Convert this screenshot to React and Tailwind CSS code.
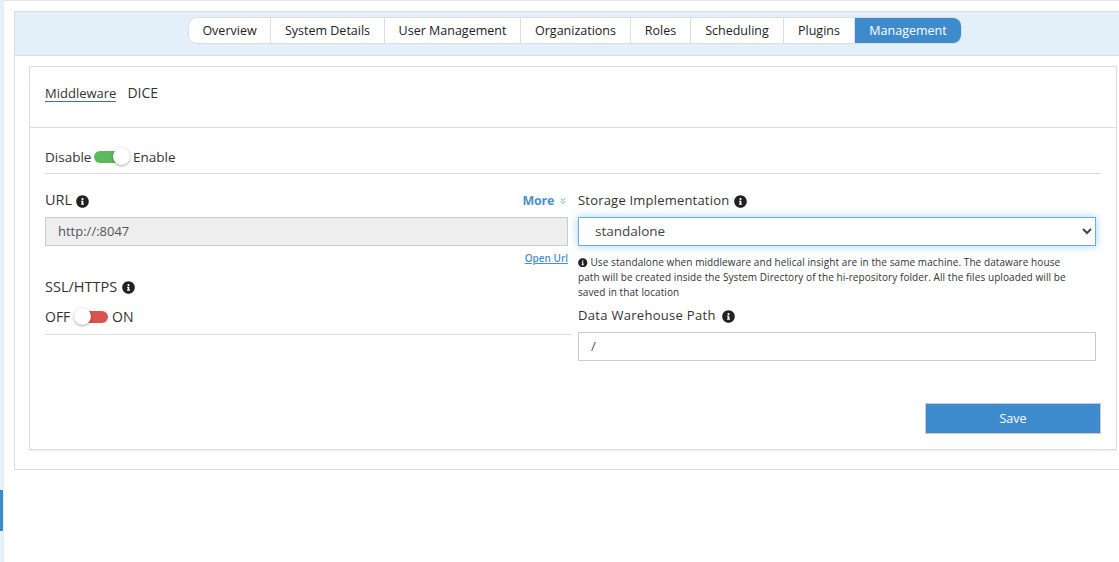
import { FaInfoCircle } from 'react-icons/fa';
import { ChevronsDown } from 'lucide-react';

const tabs = [
  { name: 'Overview', w: 'w-[82px]' },
  { name: 'System Details', w: 'w-[114px]' },
  { name: 'User Management', w: 'w-[136px]' },
  { name: 'Organizations', w: 'w-[110px]' },
  { name: 'Roles', w: 'w-[60px]' },
  { name: 'Scheduling', w: 'w-[93px]' },
  { name: 'Plugins', w: 'w-[71px]' },
];

function Info({ className = '' }) {
  return <FaInfoCircle className={`inline-block text-[#222] ${className}`} />;
}

function Toggle({ on }) {
  return (
    <span className={`relative inline-block h-[12px] w-[32px] rounded-full ${on ? 'bg-[#5cb85c]' : 'bg-[#d9534f]'}`}>
      <span
        className={`absolute top-[-3px] h-[17px] w-[17px] rounded-full bg-white shadow-[0_1px_3px_rgba(0,0,0,0.35)] ${on ? 'right-[-4px]' : 'left-[-2px]'}`}
      />
    </span>
  );
}

export default function App() {
  return (
    <div className="flex h-[562px] w-[1119px] overflow-hidden bg-white font-['Open_Sans',sans-serif] text-[13px] text-[#333]">
      <aside className="flex w-[4px] flex-col bg-[#e3f1fb] pt-[490px]">
        <div className="h-[41px] w-[3px] bg-[#3d8bcd]" />
      </aside>

      <main className="min-w-0 flex-1 border-t border-[#e4e4e4] pt-[10px] pl-[10px]">
        <section className="h-[459px] border-y border-l border-[#ddd]">
          <div className="flex h-[44px] justify-center border-b border-[#ddd] bg-[#e3f0fa] pt-[5px] pl-[16px]">
            <div className="flex h-[27px] overflow-hidden rounded-[9px] border border-[#ddd] bg-white text-[12.5px]">
              {tabs.map((t) => (
                <div key={t.name} className={`flex items-center justify-center border-r border-[#ddd] pt-[1px] text-[#222] ${t.w}`}>
                  {t.name}
                </div>
              ))}
              <div className="flex w-[106px] items-center justify-center bg-[#3d8bcd] pt-[1px] text-white">Management</div>
            </div>
          </div>

          <div className="mt-[10px] mr-[2px] ml-[14px] h-[384px] border border-[#ddd] shadow-[0_1px_1px_rgba(0,0,0,0.06)]">
            <div className="flex h-[61px] items-start gap-[11px] border-b border-[#ddd] px-[15px] pt-[17px]">
              <span className="mt-[1px] border-b border-[#3d6fa8] leading-[16px]">Middleware</span>
              <span className="text-[14px] leading-[18px]">DICE</span>
            </div>

            <div className="px-[15px]">
              <div className="flex h-[46px] items-center border-b border-[#ddd] pt-[13px] text-[13.5px]">
                <span className="w-[49px]">Disable</span>
                <Toggle on />
                <span className="ml-[7px]">Enable</span>
              </div>

              <div className="flex">
                <div className="w-[527px]">
                  <div className="mt-[17px] flex h-[20px] items-center pr-[4px]">
                    <span className="pb-[2px] text-[14.5px]">URL</span>
                    <Info className="ml-[4px] text-[13px]" />
                    <span className="ml-auto text-[12.5px] font-bold tracking-[-0.3px] text-[#4a8fd0]">More</span>
                    <ChevronsDown size={10} strokeWidth={2} className="ml-[4px] text-[#4a8fd0]" />
                  </div>
                  <input
                    readOnly
                    value="http://:8047"
                    className="mt-[6px] h-[29px] w-[523px] border border-[#ccc] bg-[#eee] px-[12px] pb-[2px] text-[13px] text-[#555] outline-none"
                  />
                  <div className="mt-[5px] w-[523px] text-right text-[10px] leading-[14px] font-semibold text-[#4a8fd0] underline">
                    Open Url
                  </div>
                  <div className="mt-[13px] flex h-[18px] items-center">
                    <span className="text-[14.5px]">SSL/HTTPS</span>
                    <Info className="ml-[5px] text-[13px]" />
                  </div>
                  <div className="mt-[12px] flex h-[18px] items-center text-[14px]">
                    <span className="w-[31px] pb-[2px]">OFF</span>
                    <Toggle />
                    <span className="ml-[4px] pb-[2px]">ON</span>
                  </div>
                  <div className="mt-[8px] border-b border-[#ddd]" />
                </div>

                <div className="ml-[6px] w-[518px]">
                  <div className="mt-[17px] flex h-[20px] items-center">
                    <span className="tracking-[0.2px]">Storage Implementation</span>
                    <Info className="ml-[5px] text-[13px]" />
                  </div>
                  <select className="mt-[6px] h-[29px] w-[518px] border border-[#66afe9] bg-white px-[12px] pb-[2px] text-[13.5px] text-[#444] shadow-[0_0_8px_rgba(102,175,233,0.6)] outline-none">
                    <option>standalone</option>
                  </select>
                  <p className="mt-[9px] pr-[14px] text-[10px] leading-[15px] tracking-[0.08px] text-[#333]">
                    <Info className="mr-[3px] align-[-1px] text-[9.5px]" />
                    Use standalone when middleware and helical insight are in the same machine. The dataware house path will be created inside the System Directory of the hi-repository folder. All the files uploaded will be saved in that location
                  </p>
                  <div className="mt-[6px] flex h-[20px] items-center">
                    <span className="tracking-[0.3px]">Data Warehouse Path</span>
                    <Info className="ml-[6px] text-[13px]" />
                  </div>
                  <input
                    readOnly
                    value="/"
                    className="mt-[6px] h-[29px] w-[518px] border border-[#ccc] bg-white px-[12px] pb-[2px] text-[13px] text-[#555] outline-none"
                  />
                </div>
              </div>

              <div className="mt-[42px] flex justify-end">
                <button className="h-[31px] w-[176px] border border-[#ccc] bg-[#3d8bcd] pt-[1px] text-[12.5px] text-white">Save</button>
              </div>
            </div>
          </div>
        </section>
      </main>
    </div>
  );
}
